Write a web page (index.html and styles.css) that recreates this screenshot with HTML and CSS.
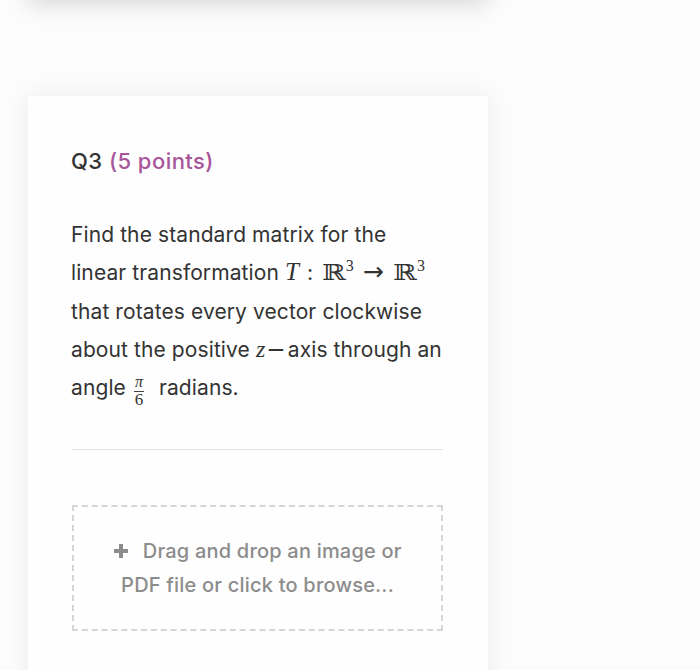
FILE: index.html
```html
<!DOCTYPE html>
<html>
<head>
<meta charset="utf-8">
<link rel="stylesheet" href="styles.css">
</head>
<body>
<div class="page">
  <div class="card card-prev"></div>
  <div class="card card-q">
    <h2 class="q-title">Q3 <span class="points">(5 points)</span></h2>
    <p class="q-text">Find the standard matrix for the<br>linear transformation <span class="math"><span class="mi">T</span><span class="mo">:</span><span class="bb">ℝ</span><sup>3</sup><span class="arrow">→</span><span class="bb">ℝ</span><sup>3</sup></span><br>that rotates every vector clockwise<br>about the positive <span class="mi z">z</span><span class="minus">−</span>axis through an<br>angle <span class="frac"><span class="num">π</span><span class="den">6</span></span> radians.</p>
    <hr class="divider">
    <div class="drop">
      <span class="plus"><svg width="16" height="16" viewBox="0 0 16 16"><path d="M8 1v14M1 8h14" stroke="#8c8c8c" stroke-width="4"/></svg></span> Drag and drop an image or<br>PDF file or click to browse...
    </div>
  </div>
</div>
</body>
</html>
```
FILE: styles.css
```css
html, body {
  margin: 0;
  padding: 0;
  background: #fcfcfc;
  height: 670px;
  overflow: hidden;
}
.page {
  display: flex;
  flex-direction: column;
  padding-left: 28px;
  width: 460px;
  gap: 96px;
}
.card {
  background: #fefefe;
  width: 460px;
}
.card-prev {
  height: 100px;
  margin-top: -100px;
  box-shadow: 0 4px 22px rgba(0,0,0,0.15);
}
.card-q {
  box-sizing: border-box;
  padding: 46px 45px 60px 43px;
  height: 700px;
  box-shadow: 0 0 22px rgba(0,0,0,0.07);
  font-family: "Inter", "Liberation Sans", sans-serif;
}
.q-title {
  margin: 0;
  font-size: 22px;
  font-weight: 500;
  color: #333;
  line-height: 38px;
  letter-spacing: 0.45px;
}
.points {
  color: #a8559a;
}
.q-text {
  margin: 36px 0 0 0;
  font-size: 21px;
  line-height: 38.3px;
  color: #333;
  letter-spacing: 0.1px;
  white-space: nowrap;
}
.math {
  font-family: "Liberation Serif", "DejaVu Serif", serif;
  font-size: 24px;
  letter-spacing: 0;
  line-height: 0;
}
.mi {
  font-style: italic;
  font-family: "Liberation Serif", serif;
  font-size: 25px;
  margin-right: 1px;
  line-height: 0;
}
.mi.z { font-size: 24px; margin-right: 1px; }
.minus {
  font-family: "DejaVu Sans", sans-serif;
  font-size: 23px;
  line-height: 0;
  margin-right: 2px;
}
.mo {
  margin: 0 8px 0 7px;
}
.bb {
  display: inline-block;
  font-family: "DejaVu Serif", serif;
  font-size: 22px;
  transform: scaleX(1.3);
  transform-origin: left center;
  margin-right: 6px;
}
.math sup {
  font-size: 16px;
  vertical-align: 9px;
  line-height: 0;
}
.arrow {
  font-family: "DejaVu Sans", sans-serif;
  margin: 0 9px 0 9px;
  font-size: 25px;
}
.frac {
  display: inline-block;
  vertical-align: -10px;
  font-family: "Liberation Serif", serif;
  margin: 0 9px 0 2px;
  text-align: center;
  letter-spacing: 0;
  line-height: 1;
}
.num {
  display: block;
  font-style: italic;
  font-size: 16px;
  border-bottom: 1px solid #444;
  padding: 0 1px 2px;
  line-height: 14px;
}
.den {
  display: block;
  font-size: 17px;
  line-height: 16px;
}
.divider {
  border: 0;
  border-top: 1.5px solid #e3e3e3;
  margin: 41px 0 0 1px;
}
.drop {
  margin: 55px 0 0 1px;
  border: 2px dashed #d6d6d6;
  height: 126px;
  box-sizing: border-box;
  text-align: center;
  padding-top: 28px;
  font-size: 20px;
  font-weight: 500;
  color: #8c8c8c;
  line-height: 33px;
  letter-spacing: 0.2px;
}
.plus {
  display: inline-block;
  vertical-align: -1px;
  margin-right: 8px;
}
```
